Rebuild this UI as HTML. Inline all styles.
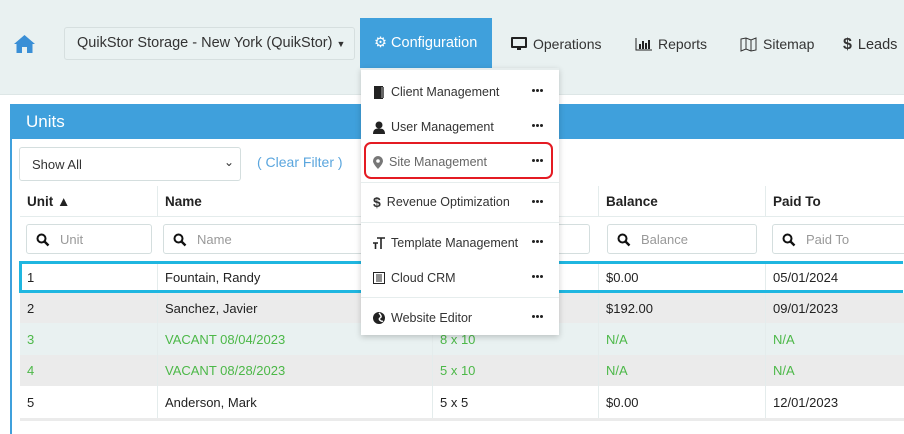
<!DOCTYPE html>
<html><head><style>
*{box-sizing:border-box;margin:0;padding:0}
body{width:904px;height:421px;overflow:hidden;background:#fff;font-family:"Liberation Sans",sans-serif;font-size:13px;color:#222;position:relative}
.hdr{position:absolute;left:0;top:0;width:904px;height:95px;background:#e9f1f1;border-bottom:1px solid #dde6e6}
.abs{position:absolute}
.nav{position:absolute;top:36px;font-size:14px;color:#333;display:flex;align-items:center;gap:6px}
.panel{position:absolute;left:10px;top:104px;width:900px;height:330px;border-left:2px solid #3fa0dc}
.ph{position:absolute;left:10px;top:104px;width:900px;height:35px;background:#3fa0dc;color:#fff;font-size:17px;padding:8px 0 0 16px}
.sel{position:absolute;left:19px;top:147px;width:222px;height:34px;border:1px solid #d4dede;border-radius:3px;padding:9px 12px;font-size:13px;color:#333}
.row{position:absolute;left:20px;width:884px}
.cell{position:absolute;top:0;height:100%;padding-left:7px;display:flex;align-items:center;border-left:1px solid #e4ecec}
.inp{position:absolute;top:7px;height:30px;border:1px solid #d4dede;border-radius:3px;color:#999;font-size:13px;padding:7px 0 0 33px}
.inp svg{position:absolute;left:9px;top:8px}
.green{color:#4cb848}
.dd{position:absolute;left:361px;top:68px;width:198px;height:267px;background:#fff;box-shadow:0 2px 6px rgba(0,0,0,.2);border-top:2px solid #e6eded}
.it{position:absolute;left:12px;font-size:12.5px;color:#333;display:flex;align-items:center;gap:6px;height:16px}
.it svg{flex:none}
.dots{position:absolute;left:171px;width:12px;height:4px}
.dots:before{content:"";position:absolute;left:0;top:0;width:3px;height:3px;border-radius:50%;background:#222;box-shadow:4px 0 #222,8px 0 #222}
.sep{position:absolute;left:0;width:198px;height:1px;background:#e6eded}
</style></head><body>
<div class="hdr"></div>
<svg class="abs" style="left:13px;top:34px" width="23" height="20" viewBox="0 0 23 20"><path d="M11.5 1 L1 10 L3.5 10 L3.5 19 L9 19 L9 13 L14 13 L14 19 L19.5 19 L19.5 10 L22 10 Z" fill="#3a8fd6"/></svg>
<div class="abs" style="left:64px;top:27px;width:291px;height:33px;border:1px solid #d6dfdf;border-radius:3px;background:#eaf2f2;padding:7px 0 0 12px;font-size:14.5px;color:#333">QuikStor Storage - New York (QuikStor) <span style="font-size:9px">▼</span></div>
<div class="abs" style="left:360px;top:18px;width:132px;height:50px;background:#3fa0dc;color:#fff;font-size:14.5px;padding:17px 0 0 14px">⚙ Configuration</div>
<div class="nav" style="left:511px"><svg width="16" height="14"><rect x="0" y="0" width="16" height="11" rx="1" fill="#222"/><rect x="2" y="2" width="12" height="7" fill="#e9f1f1"/><rect x="6" y="11" width="4" height="2" fill="#222"/></svg>Operations</div>
<div class="nav" style="left:635px"><svg width="17" height="13"><path d="M1 0V12H17" stroke="#222" fill="none"/><rect x="4" y="6" width="2" height="5" fill="#222"/><rect x="7" y="3" width="2" height="8" fill="#222"/><rect x="10" y="5" width="2" height="6" fill="#222"/><rect x="13" y="2" width="2" height="9" fill="#222"/></svg>Reports</div>
<div class="nav" style="left:740px"><svg width="17" height="15"><path d="M1 2L6 1L11 3L16 1V13L11 14L6 12L1 14Z M6 1V12 M11 3V14" stroke="#333" fill="none"/></svg>Sitemap</div>
<div class="nav" style="left:843px;font-size:14.5px"><b style="font-size:16px">$</b>Leads</div>

<div class="panel"></div>
<div class="ph">Units</div>
<div class="sel">Show All<span style="position:absolute;right:6px;top:7px;font-size:12px">⌄</span></div>
<div class="abs" style="left:257px;top:154px;color:#5ba6de;font-size:14px">( Clear Filter )</div>

<div class="row" style="top:186px;height:30px;font-weight:bold;font-size:13.5px">
<div class="cell" style="left:0;border:none">Unit ▲</div><div class="cell" style="left:137px">Name</div><div class="cell" style="left:412px"></div><div class="cell" style="left:578px">Balance</div><div class="cell" style="left:745px">Paid To</div></div>
<div class="row" style="top:216px;height:46px;border-top:1px solid #e4ecec">
<div class="inp" style="left:6px;width:126px"><svg width="14" height="14"><circle cx="5.5" cy="5.5" r="4" stroke="#111" stroke-width="2" fill="none"/><path d="M8.5 8.5L12.5 12.5" stroke="#111" stroke-width="2.4"/></svg>Unit</div>
<div class="inp" style="left:143px;width:270px"><svg width="14" height="14"><circle cx="5.5" cy="5.5" r="4" stroke="#111" stroke-width="2" fill="none"/><path d="M8.5 8.5L12.5 12.5" stroke="#111" stroke-width="2.4"/></svg>Name</div>
<div class="inp" style="left:420px;width:150px"></div>
<div class="inp" style="left:587px;width:150px"><svg width="14" height="14"><circle cx="5.5" cy="5.5" r="4" stroke="#111" stroke-width="2" fill="none"/><path d="M8.5 8.5L12.5 12.5" stroke="#111" stroke-width="2.4"/></svg>Balance</div>
<div class="inp" style="left:752px;width:150px"><svg width="14" height="14"><circle cx="5.5" cy="5.5" r="4" stroke="#111" stroke-width="2" fill="none"/><path d="M8.5 8.5L12.5 12.5" stroke="#111" stroke-width="2.4"/></svg>Paid To</div></div>
<div class="row" style="top:261px;height:32px;left:19px;border:3px solid #1fb6e0;border-right:none">
<div class="cell" style="left:0;border:none;padding-left:5px">1</div><div class="cell" style="left:135px">Fountain, Randy</div><div class="cell" style="left:410px"></div><div class="cell" style="left:576px">$0.00</div><div class="cell" style="left:743px">05/01/2024</div></div>
<div class="row" style="top:293px;height:30px;background:#ebebeb">
<div class="cell" style="left:0;border:none">2</div><div class="cell" style="left:137px">Sanchez, Javier</div><div class="cell" style="left:412px"></div><div class="cell" style="left:578px">$192.00</div><div class="cell" style="left:745px">09/01/2023</div></div>
<div class="row green" style="top:323px;height:32px;background:#e9f1f1">
<div class="cell" style="left:0;border:none">3</div><div class="cell" style="left:137px">VACANT 08/04/2023</div><div class="cell" style="left:412px">8 x 10</div><div class="cell" style="left:578px">N/A</div><div class="cell" style="left:745px">N/A</div></div>
<div class="row green" style="top:355px;height:31px;background:#ebebeb">
<div class="cell" style="left:0;border:none">4</div><div class="cell" style="left:137px">VACANT 08/28/2023</div><div class="cell" style="left:412px">5 x 10</div><div class="cell" style="left:578px">N/A</div><div class="cell" style="left:745px">N/A</div></div>
<div class="row" style="top:386px;height:32px">
<div class="cell" style="left:0;border:none">5</div><div class="cell" style="left:137px">Anderson, Mark</div><div class="cell" style="left:412px">5 x 5</div><div class="cell" style="left:578px">$0.00</div><div class="cell" style="left:745px">12/01/2023</div></div>
<div class="row" style="top:418px;height:3px;background:#ebebeb"></div>

<div class="dd">
<div class="it" style="top:14px"><svg width="12" height="13"><rect x="1" y="0" width="9" height="13" fill="#222"/><rect x="8" y="1" width="3" height="11" fill="#666"/></svg>Client Management</div><div class="dots" style="top:19px"></div>
<div class="it" style="top:49px"><svg width="12" height="13"><circle cx="6" cy="4" r="3.5" fill="#222"/><path d="M0 13C0 8 3 7.5 6 7.5S12 8 12 13Z" fill="#222"/></svg>User Management</div><div class="dots" style="top:54px"></div>
<div class="it" style="top:84px;color:#666"><svg width="10" height="13"><path d="M5 0A5 5 0 0 1 10 5C10 8 5 13 5 13S0 8 0 5A5 5 0 0 1 5 0Z" fill="#777"/><circle cx="5" cy="5" r="1.8" fill="#fff"/></svg>Site Management</div><div class="dots" style="top:89px"></div>
<div class="sep" style="top:112px"></div>
<div class="it" style="top:124px"><b style="font-size:14px">$</b> Revenue Optimization</div><div class="dots" style="top:130px"></div>
<div class="sep" style="top:152px"></div>
<div class="it" style="top:165px"><svg width="12" height="13"><path d="M4 1H12M8 1V12M0 6H5M2.5 6V12" stroke="#222" stroke-width="1.6" fill="none"/></svg>Template Management</div><div class="dots" style="top:170px"></div>
<div class="it" style="top:200px"><svg width="12" height="12"><rect x="0.5" y="0.5" width="11" height="11" fill="none" stroke="#222"/><path d="M3 3H9M3 5H9M3 7H9M3 9H9" stroke="#222"/></svg>Cloud CRM</div><div class="dots" style="top:205px"></div>
<div class="sep" style="top:227px"></div>
<div class="it" style="top:240px"><svg width="12" height="12"><circle cx="6" cy="6" r="6" fill="#222"/><path d="M6 1C8 3 9 5 7 6S8 10 10 9" stroke="#fff" stroke-width="1.5" fill="none"/></svg>Website Editor</div><div class="dots" style="top:245px"></div>
</div>
<div class="abs" style="left:364px;top:142px;width:189px;height:37px;border:2px solid #e41b23;border-radius:7px"></div>
</body></html>
